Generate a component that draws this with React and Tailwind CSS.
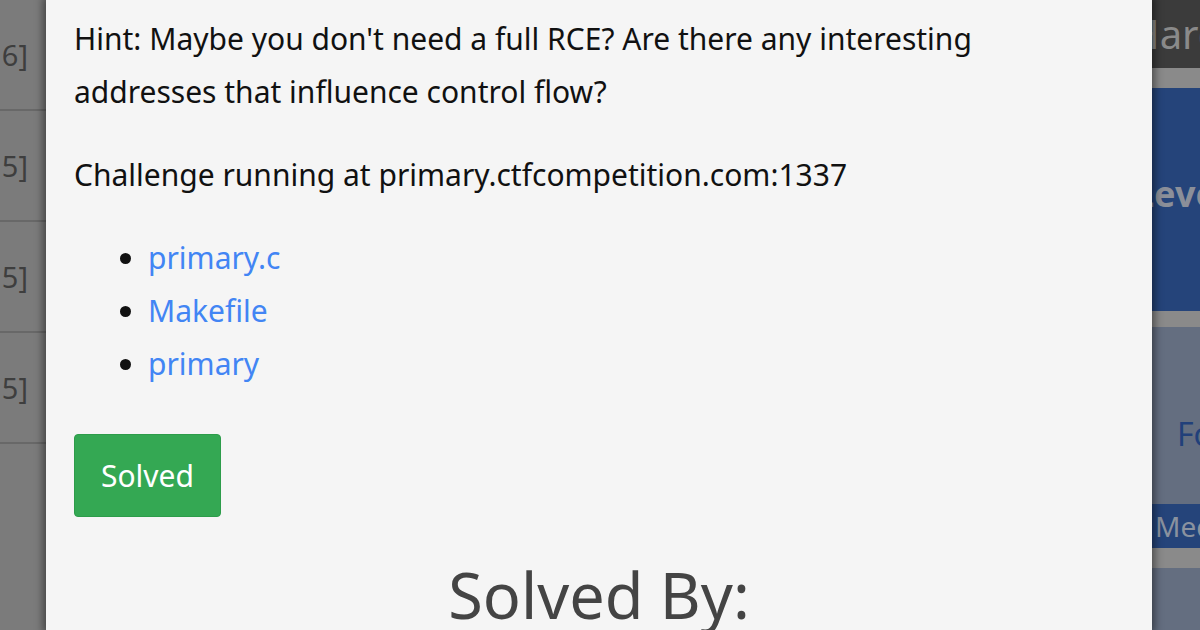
const leftRows = ["6]", "5]", "5]", "5]"];
const files = ["primary.c", "Makefile", "primary"];

export default function App() {
  return (
    <div
      className="relative h-[630px] w-[1200px] overflow-hidden bg-[#7b7b7b] flex"
      style={{ fontFamily: '"Noto Sans", "Open Sans", sans-serif' }}
    >
      {/* page behind the backdrop */}
      <div className="w-[46px] flex flex-col overflow-hidden">
        {leftRows.map((t, i) => (
          <div
            key={i}
            className="h-[111px] shrink-0 flex items-center justify-end pr-[18px] border-b-2 border-[#686868] text-[29px] text-[#3e3e3e] whitespace-nowrap"
          >
            {t}
          </div>
        ))}
      </div>
      <div className="flex-1" />
      <div className="w-[48px] flex flex-col overflow-hidden bg-[#8a8a8a]">
        <div className="h-[68px] shrink-0 bg-[#3b3b3b] flex items-center text-[40px] text-[#8a8a8a] whitespace-nowrap overflow-hidden">
          <span className="-ml-[22px]">Hard</span>
        </div>
        <div className="h-[223px] shrink-0 mt-[20px] bg-[#25447a] flex items-end pb-[90px] whitespace-nowrap overflow-hidden">
          <span className="-ml-[18px] text-[36px] font-bold text-[#8b8f99]">Leve</span>
        </div>
        <div className="h-[221px] shrink-0 mt-[16px] bg-[#646e80] flex flex-col overflow-hidden">
          <div className="flex-1 flex items-end pb-[46px] pl-[25px] whitespace-nowrap">
            <span className="text-[32px] text-[#21407a]">Fo</span>
          </div>
          <div className="h-[44px] bg-[#25447a] flex items-center pl-[3px] whitespace-nowrap text-[28px] text-[#8a929f]">
            Med
          </div>
        </div>
        <div className="flex-1 mt-[20px] bg-[#646e80]" />
      </div>

      {/* modal over the backdrop */}
      <div className="absolute top-0 bottom-0 left-[46px] w-[1106px] bg-[#f5f5f5] shadow-[0_0_8px_3px_rgba(0,0,0,0.45)] px-[28px] pt-[12px] text-[#111]">
        <p className="max-w-[1010px] text-[30px] leading-[53px]">
          Hint: Maybe you don't need a full RCE? Are there any interesting
          addresses that influence control flow?
        </p>
        <p className="mt-[30px] text-[30px] leading-[53px]">
          Challenge running at primary.ctfcompetition.com:1337
        </p>
        <ul className="mt-[30px] list-disc pl-[74px] text-[30px] leading-[53px]">
          {files.map((f) => (
            <li key={f}>
              <a href="#" className="text-[#4285f4]">
                {f}
              </a>
            </li>
          ))}
        </ul>
        <button className="mt-[44px] h-[83px] px-[26px] rounded-[4px] bg-[#34a853] border border-[#2d9c4a] text-white text-[30px] leading-[53px]">
          Solved
        </button>
        <h2 className="mt-[38px] text-center text-[63px] leading-[80px] text-[#444]">
          Solved By:
        </h2>
      </div>
    </div>
  );
}
